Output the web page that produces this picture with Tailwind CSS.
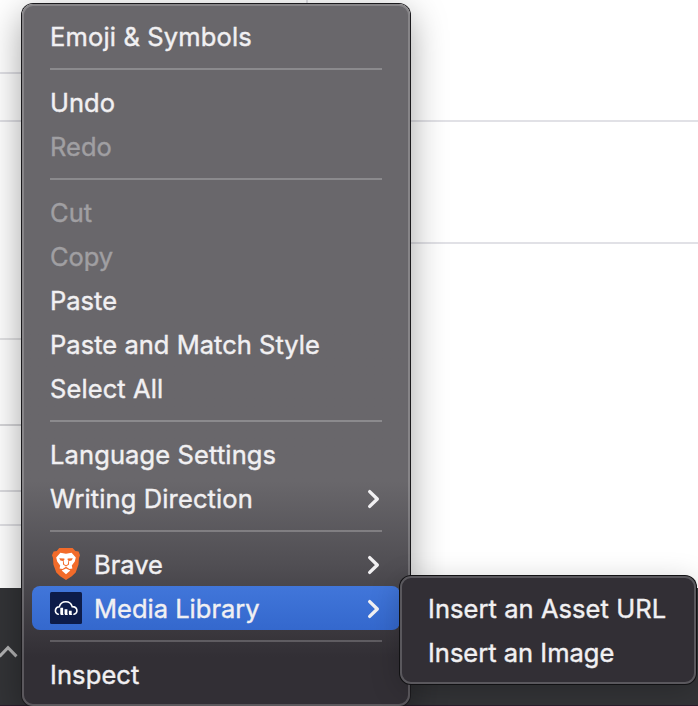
<!DOCTYPE html>
<html lang="en">
<head>
<meta charset="utf-8">
<title>Context menu</title>
<script src="https://cdn.jsdelivr.net/npm/@tailwindcss/browser@4"></script>
</head>
<body class="bg-white">
<div class="relative h-[706px] w-[698px] overflow-hidden font-[Inter,sans-serif] text-[25.5px] font-normal text-[#f1f0f2] [-webkit-text-stroke:0.4px_currentColor]">
  <!-- page behind the menu -->
  <div class="flex h-[588px] bg-white">
    <div class="w-[200px]">
      <div class="h-[74px] border-b-2 border-[#e0e0e5]"></div>
      <div class="h-[48px] border-b-2 border-[#e0e0e5]"></div>
      <div class="h-[218px] border-b-2 border-[#e2e2e4]"></div>
      <div class="h-[86px] border-b-2 border-[#d6d6d9]"></div>
      <div class="h-[66px] border-b-2 border-[#dcdce0]"></div>
      <div class="h-[34px] border-b-2 border-[#e0e0e4]"></div>
    </div>
    <div class="h-[60px] w-[108px] border-r-2 border-[#e0e0e5]"></div>
    <div class="flex-1">
      <div class="h-[122px] border-b-2 border-[#e1e1e6]"></div>
      <div class="h-[122px] border-b-2 border-[#e1e1e6]"></div>
    </div>
  </div>
  <div class="flex h-[118px] items-start border-b border-[#2b1d2d] bg-[#333437]">
    <svg class="mt-[56px]" width="18" height="16" viewBox="0 0 18 16" fill="none" stroke="#b3b3b4" stroke-width="3"><path d="M-.5 12.4 8 3.6 16.5 12.4"/></svg>
  </div>

  <!-- context menu -->
  <div class="absolute left-[22px] top-[4px] h-[702px] w-[388px] rounded-[11px] border-2 border-white/20 bg-linear-to-b from-[#69676b] from-[68%] via-[#504e53] via-[80%] to-[#322f35] to-[93%] px-2 py-[8px] [background-origin:border-box] shadow-[0_0_0_1px_#1b1a1d,0_10px_36px_rgba(0,0,0,0.38)]">
    <div class="flex h-11 items-center px-[18px] pt-[2px]"><span class="tracking-[0.15px]">Emoji &amp; Symbols</span></div>
    <div class="flex h-[22px] items-center px-[18px]"><div class="h-[2px] w-full bg-white/23"></div></div>
    <div class="flex h-11 items-center px-[18px] pt-[2px]"><span>Undo</span></div>
    <div class="flex h-11 items-center px-[18px] pt-[2px] text-[#a09fa2]"><span>Redo</span></div>
    <div class="flex h-[22px] items-center px-[18px]"><div class="h-[2px] w-full bg-white/23"></div></div>
    <div class="flex h-11 items-center px-[18px] pt-[2px] text-[#a09fa2]"><span>Cut</span></div>
    <div class="flex h-11 items-center px-[18px] pt-[2px] text-[#a09fa2]"><span class="tracking-[-0.1px]">Copy</span></div>
    <div class="flex h-11 items-center px-[18px] pt-[2px]"><span>Paste</span></div>
    <div class="flex h-11 items-center px-[18px] pt-[2px]"><span class="tracking-[0.03px]">Paste and Match Style</span></div>
    <div class="flex h-11 items-center px-[18px] pt-[2px]"><span class="tracking-[0.1px]">Select All</span></div>
    <div class="flex h-[22px] items-center px-[18px]"><div class="h-[2px] w-full bg-white/23"></div></div>
    <div class="flex h-11 items-center px-[18px] pt-[2px]"><span class="tracking-[0.12px]">Language Settings</span></div>
    <div class="flex h-11 items-center justify-between px-[18px] pt-[2px]"><span class="tracking-[0.12px]">Writing Direction</span>
      <svg width="16" height="22" viewBox="0 0 16 22" fill="none" stroke="#f1f0f2" stroke-width="3.4" stroke-linecap="round" stroke-linejoin="round"><path d="M3.7 3.6 11.3 11 3.7 18.4"/></svg></div>
    <div class="flex h-[22px] items-center px-[18px]"><div class="h-[2px] w-full bg-white/23"></div></div>
    <div class="flex h-11 items-center px-[18px] pt-[2px]">
      <svg class="-mt-[2px] mr-3 shrink-0" width="32" height="36" viewBox="0 0 32 36">
        <path fill="#f26b2a" d="M9.2 2 22.6 2 25.4 5 28.6 5.4 30 9.2 29 12 28.5 18.5 25.7 26.6 21.8 30.2 16 34 10.2 30.2 6.3 26.6 3.4 18.5 3 12 2 9.2 3.6 5.4 6.8 5Z"/>
        <path fill="#fff" d="M10.4 6.8 16 7.8 21.6 6.8 25.8 11.6 24.8 15.4 21.8 19.5 22.4 22.6 19.5 23 16 20.7 12.5 23 9.6 22.6 10.2 19.5 7.2 15.4 6.2 11.6Z"/>
        <path fill="#fff" d="M16 22.4 20.3 24.6 16 28.2 11.7 24.6Z"/>
        <path fill="#f26b2a" d="M9.2 12.3 14.2 12.6 14.6 13.2 13.6 14.7 14.2 18.2 16 19.3 17.8 18.2 18.4 14.7 17.4 13.2 17.8 12.6 22.8 12.3 21.6 14.5 19.1 15 19 18.5 16 20.4 13 18.5 12.9 15 10.4 14.5Z"/>
      </svg>
      <span class="flex-1">Brave</span>
      <svg width="16" height="22" viewBox="0 0 16 22" fill="none" stroke="#f1f0f2" stroke-width="3.4" stroke-linecap="round" stroke-linejoin="round"><path d="M3.7 3.6 11.3 11 3.7 18.4"/></svg></div>
    <div class="flex h-11 items-center rounded-[8px] bg-linear-to-b from-[#4176da] to-[#3468cd] px-[18px] pt-[2px]">
      <svg class="-mt-[2px] mr-3 shrink-0" width="32" height="32" viewBox="0 0 32 32">
        <rect width="32" height="32" rx="1.5" fill="#0d1c49"/>
        <path fill="none" stroke="#fff" stroke-width="1.6" stroke-linecap="round" d="M8.2 22.3C3.8 20.8 5 14.6 9.3 14.7 11.3 7.9 20.5 8.3 22.2 14.6 27.8 14.6 28.4 20.8 24 22.3"/>
        <path fill="#fff" d="M10.3 15.7h2.8v6.4l.6 1h-2.8l-.6-1ZM14.6 17.3h2.8v4.8l.6 1h-2.8l-.6-1ZM18.9 18.7h2.8v3.4l.6 1h-2.8l-.6-1Z"/>
      </svg>
      <span class="flex-1">Media Library</span>
      <svg width="16" height="22" viewBox="0 0 16 22" fill="none" stroke="#f1f0f2" stroke-width="3.4" stroke-linecap="round" stroke-linejoin="round"><path d="M3.7 3.6 11.3 11 3.7 18.4"/></svg></div>
    <div class="flex h-[22px] items-center px-[18px]"><div class="h-[2px] w-full bg-white/20"></div></div>
    <div class="flex h-11 items-center px-[18px] pt-[2px]"><span class="tracking-[0.1px]">Inspect</span></div>
  </div>

  <!-- submenu -->
  <div class="absolute left-[400px] top-[576px] h-[108px] w-[296px] rounded-[11px] border-2 border-[#5a585d] bg-[#322f35] px-[26px] py-[9px] shadow-[0_0_0_1px_#111113,0_6px_30px_rgba(0,0,0,0.22)]">
    <div class="flex h-11 items-center whitespace-nowrap"><span class="tracking-[0.06px]">Insert an Asset URL</span></div>
    <div class="flex h-11 items-center whitespace-nowrap"><span>Insert an Image</span></div>
  </div>
</div>
</body>
</html>
